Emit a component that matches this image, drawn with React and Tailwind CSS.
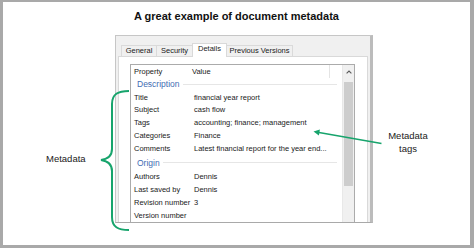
import React from "react";

const descRows = [
  ["Title", "financial year report"],
  ["Subject", "cash flow"],
  ["Tags", "accounting; finance; management"],
  ["Categories", "Finance"],
  ["Comments", "Latest financial report for the year end..."],
];

const originRows = [
  ["Authors", "Dennis"],
  ["Last saved by", "Dennis"],
  ["Revision number", "3"],
  ["Version number", ""],
];

function Tab({ label, width, active }) {
  if (active) {
    return (
      <div
        className={`${width} h-[14px] -ml-px -mb-px relative z-10 flex items-center justify-center bg-white border border-b-0 border-[#d9d9d9] text-[7.5px] leading-none text-[#1a1a1a] pb-[3px]`}
      >
        {label}
      </div>
    );
  }
  return (
    <div
      className={`${width} h-[11px] -ml-px flex items-center justify-center bg-[#f0f0f0] border border-b-0 border-[#dadada] text-[7.5px] leading-none text-[#1a1a1a]`}
    >
      {label}
    </div>
  );
}

function Row({ name, value }) {
  return (
    <div className="h-[13px] flex items-center text-[7.5px] leading-none text-[#1a1a1a]">
      <div className="w-[63px] pl-[3px] whitespace-nowrap">{name}</div>
      <div className="whitespace-nowrap">{value}</div>
    </div>
  );
}

function Group({ title, height }) {
  return (
    <div className={`${height} flex items-center pl-[6px] pr-[5px]`}>
      <span className="text-[8.5px] leading-none text-[#3f6db3] pr-[3px]">{title}</span>
      <div className="flex-1 h-px bg-[#e6e6e6]" />
    </div>
  );
}

function Dialog() {
  return (
    <div className="ml-[112px] mt-[12px] w-[258px] h-[188px] flex flex-col bg-[#f0f0f0] border-l border-t border-[#c6c6c6] border-r-[3px] border-r-[#bcbcbc] border-b border-b-[#a9a9a9]">
      <div className="mt-[7px] h-[13px] pl-[6px] flex items-end">
        <Tab label="General" width="w-[36px]" />
        <Tab label="Security" width="w-[37px]" />
        <Tab label="Details" width="w-[35px]" active />
        <Tab label="Previous Versions" width="w-[67px]" />
      </div>
      <div className="ml-[2px] w-[250px] flex-1 flex flex-col bg-white border border-b-0 border-[#d9d9d9] overflow-hidden">
        <div className="mt-[7px] ml-[11px] w-[225px] flex-1 flex border border-b-0 border-[#ababab] overflow-hidden">
          <div className="flex-1 flex flex-col">
            <div className="h-[13px] flex items-center text-[7.5px] leading-none text-[#1a1a1a]">
              <div className="w-[61px] pl-[3px]">Property</div>
              <div className="w-[138px] h-full flex items-center border-r border-[#e4e4e4]">Value</div>
            </div>
            <Group title="Description" height="h-[13px]" />
            {descRows.map(([n, v]) => (
              <Row key={n} name={n} value={v} />
            ))}
            <Group title="Origin" height="h-[15px]" />
            {originRows.map(([n, v]) => (
              <Row key={n} name={n} value={v} />
            ))}
          </div>
          <div className="w-[12px] flex flex-col bg-[#f0f0f0] border-l border-[#e8e8e8]">
            <div className="h-[13px] flex items-center justify-center">
              <svg width="6" height="4" viewBox="0 0 6 4">
                <path d="M0.6 3.4 L3 1 L5.4 3.4" fill="none" stroke="#5a5a5a" strokeWidth="1.1" />
              </svg>
            </div>
            <div className="h-[4px]" />
            <div className="mx-[1px] h-[104px] bg-[#cdcdcd]" />
          </div>
        </div>
      </div>
    </div>
  );
}

export default function App() {
  return (
    <div className="w-[474px] h-[248px] bg-white border-[#a9a9a9] border-t-2 border-l-[3px] border-r-4 border-b-[3px] font-['Liberation_Sans',Arial,sans-serif] overflow-hidden">
      <div className="relative w-full h-full">
        <div className="mt-[8px] h-[13px] leading-[13px] text-[11px] font-bold text-center text-[#111]">
          A great example of document metadata
        </div>

        <Dialog />

        {/* annotations */}
        <div className="absolute left-[43px] top-[142px] h-[13px] leading-[13px] text-[9.5px] text-[#1a1a1a]">
          Metadata
        </div>
        <div className="absolute left-[375px] top-[120px] w-[60px] text-center leading-[12.7px] text-[9.5px] text-[#1a1a1a]">
          Metadata
          <br />
          tags
        </div>
        <svg
          className="absolute left-[-3px] top-[-2px] pointer-events-none"
          width="474"
          height="248"
          viewBox="0 0 474 248"
        >
          <path
            d="M129 83 C118 83 112 86 112 96 L112 141 C112 148 108 151 101 152 C108 153 112 156 112 163 L112 209 C112 219 118 222 129 222"
            fill="none"
            stroke="#17a46c"
            strokeWidth="2"
          />
          <line x1="319" y1="124.5" x2="381.5" y2="135.5" stroke="#17a46c" strokeWidth="1.6" />
          <polygon points="313.5,123.5 319.9,121.4 318.9,127.6" fill="#17a46c" />
        </svg>
      </div>
    </div>
  );
}
